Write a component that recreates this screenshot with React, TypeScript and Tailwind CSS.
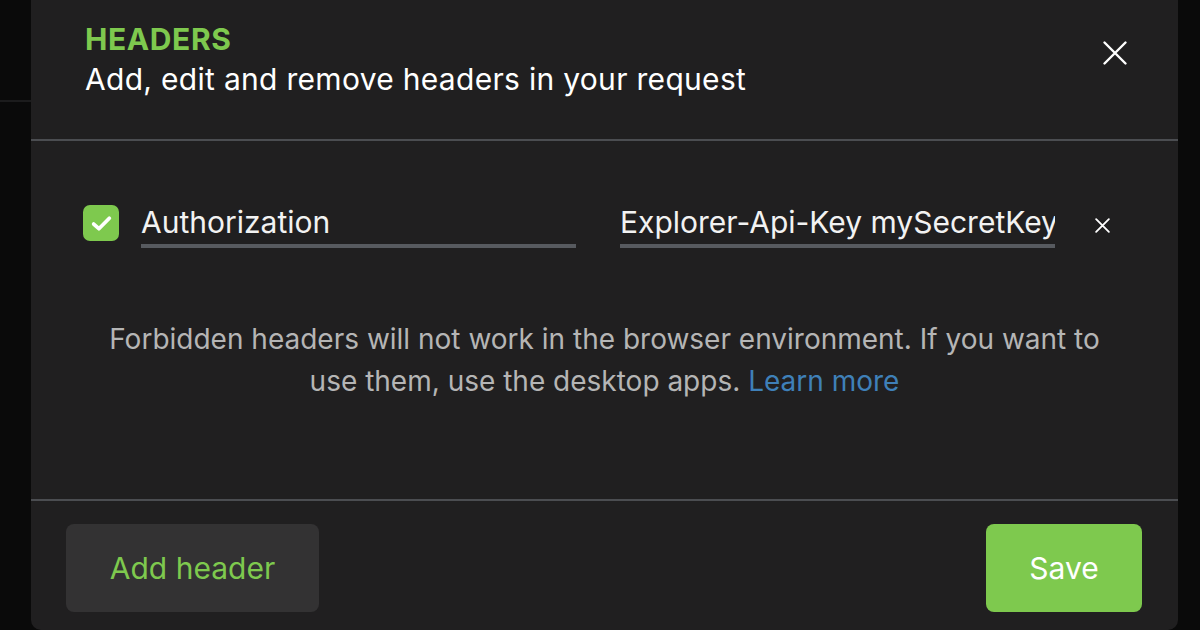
import React, { useState } from 'react';

const FONT = { fontFamily: 'Inter, "Noto Sans", sans-serif' };

const CloseIcon: React.FC<{ className?: string; strokeWidth?: number }> = ({ className, strokeWidth = 2 }) => (
  <svg viewBox="0 0 24 24" className={className} fill="none" stroke="currentColor" strokeWidth={strokeWidth} strokeLinecap="round">
    <path d="M3 3 L21 21 M21 3 L3 21" />
  </svg>
);

const HeaderInput: React.FC<{ value: string; onChange: (v: string) => void }> = ({ value, onChange }) => (
  <input
    value={value}
    onChange={(e) => onChange(e.target.value)}
    className="w-[435px] h-[48px] bg-transparent text-[30px] text-[#f2f2f2] border-b-[4px] border-[#575a5f] outline-none p-0"
    style={FONT}
  />
);

export default function App() {
  const [checked, setChecked] = useState(true);
  const [name, setName] = useState('Authorization');
  const [value, setValue] = useState('Explorer-Api-Key mySecretKey');

  return (
    <div className="w-[1200px] h-[630px] flex bg-[#0a0a0a] overflow-hidden" style={FONT}>
      {/* left backdrop */}
      <div className="w-[31px] flex flex-col">
        <div className="h-[102px] border-b-[2px] border-[#1c1c1d]" />
      </div>

      {/* modal */}
      <div className="w-[1147px] h-[630px] bg-[#201f20] rounded-b-[10px] flex flex-col">
        {/* Header */}
        <div className="h-[141px] border-b-[2px] border-[#4b4d51] pl-[54px] pr-[49px] pt-[20px] flex justify-between">
          <div>
            <div className="text-[30px] leading-[39px] font-bold text-[#7ec94e] tracking-[0.6px]">HEADERS</div>
            <div className="text-[30px] leading-[40px] text-white tracking-[0.3px]">Add, edit and remove headers in your request</div>
          </div>
          <button className="mt-[19px] w-[28px] h-[28px] text-white">
            <CloseIcon className="w-[28px] h-[28px]" strokeWidth={2.1} />
          </button>
        </div>

        {/* Body */}
        <div className="h-[360px] border-b-[2px] border-[#4b4d51] flex flex-col">
          <div className="mt-[59px] pl-[52px] flex items-start">
            <button
              onClick={() => setChecked(!checked)}
              className="mt-[5px] w-[36px] h-[36px] rounded-[7px] bg-[#7ec94e] flex items-center justify-center"
            >
              {checked && (
                <svg viewBox="0 0 24 24" className="w-[25px] h-[25px]" fill="none" stroke="white" strokeWidth={3.6} strokeLinecap="round" strokeLinejoin="round">
                  <path d="M4.5 12.5 L9.5 17 L19.5 7" />
                </svg>
              )}
            </button>
            <div className="ml-[22px]">
              <HeaderInput value={name} onChange={setName} />
            </div>
            <div className="ml-[44px]">
              <HeaderInput value={value} onChange={setValue} />
            </div>
            <button className="ml-[39px] mt-[17px] w-[17px] h-[17px] text-white">
              <CloseIcon className="w-[17px] h-[17px]" strokeWidth={2.6} />
            </button>
          </div>
          <p className="mt-[70px] px-[40px] text-center text-[28px] leading-[42px] text-[#b5b5b5]">
            Forbidden headers will not work in the browser environment. If you want to
            <br />
            use them, use the desktop apps.{' '}
            <a href="#" className="text-[#3f80b8]">Learn more</a>
          </p>
        </div>

        {/* Footer */}
        <div className="flex justify-between pl-[35px] pr-[36px] pt-[23px]">
          <button className="w-[253px] h-[88px] rounded-[8px] bg-[#333233] text-[30px] text-[#7ec94e]">
            Add header
          </button>
          <button className="w-[156px] h-[88px] rounded-[8px] bg-[#7ec94e] text-[30px] text-white">
            Save
          </button>
        </div>
      </div>

      {/* right backdrop */}
      <div className="flex-1" />
    </div>
  );
}
